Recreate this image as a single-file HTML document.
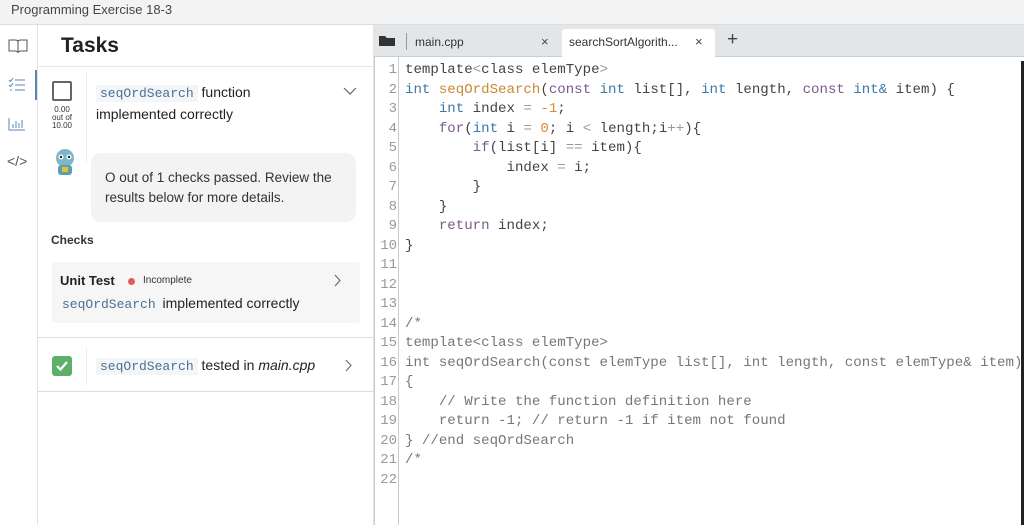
<!DOCTYPE html>
<html><head><meta charset="utf-8"><style>
*{margin:0;padding:0;box-sizing:border-box}
body{width:1024px;height:525px;overflow:hidden;background:#fff;font-family:"Liberation Sans",sans-serif;position:relative;color:#222}
.abs{position:absolute}
.title{left:0;top:0;width:1024px;height:25px;background:#f3f3f3;border-bottom:1px solid #ddd;font-size:13px;color:#444;padding:2px 0 0 11px}
.rail{left:0;top:25px;width:38px;height:500px;background:#fff;border-right:1px solid #e3e3e3}
.panel{left:38px;top:25px;width:336px;height:500px;background:#fff}
.mono{font-family:"Liberation Mono",monospace;color:#4a7096;background:#f3f5f7;padding:1px 4px;font-size:13px}
.editor{left:374px;top:57px;width:650px;height:468px;border-left:1px solid #ccc;background:#fff}
.gut{position:absolute;left:0;top:0;width:24px;height:468px;border-right:1px solid #ccc;background:#fff}
.ln{position:absolute;left:0;width:22px;text-align:right;color:#999;font-family:"Liberation Mono",monospace;font-size:14px}
.cl{position:absolute;left:30px;white-space:pre;font-family:"Liberation Mono",monospace;font-size:14.1px;color:#444}
.k{color:#3a7aa8}.p{color:#7b5a8c}.f{color:#c88a2f}.n{color:#d98a3a}.o{color:#999}.c{color:#777}
</style></head><body>
<div class="abs title">Programming Exercise 18-3</div>
<div class="abs rail">
 <svg class="abs" style="left:8px;top:13px" width="20" height="16" viewBox="0 0 20 16"><path d="M1 2h6c2 0 3 1 3 2v11c0-1-1-2-3-2H1zM19 2h-6c-2 0-3 1-3 2v11c0-1 1-2 3-2h6z" fill="none" stroke="#555" stroke-width="1"/></svg>
 <svg class="abs" style="left:8px;top:52px" width="18" height="16" viewBox="0 0 18 16"><path d="M1 3l1.5 1.5L5 1M7 3h10M1 8l1.5 1.5L5 6M7 8h10M7 13h10M2 13h2" fill="none" stroke="#5d84b8" stroke-width="1"/></svg>
 <div class="abs" style="left:35px;top:45px;width:2px;height:30px;background:#5d84b8"></div>
 <svg class="abs" style="left:8px;top:92px" width="18" height="14" viewBox="0 0 18 14"><path d="M1 1v12h16M5 11V7M8 11V4M11 11V6M14 11V3" fill="none" stroke="#5d84b8" stroke-width="1"/></svg>
 <div class="abs" style="left:7px;top:128px;font-size:14px;color:#555">&lt;/&gt;</div>
</div>
<div class="abs panel">
 <div class="abs" style="left:0;top:0;width:336px;height:42px;border-bottom:1px solid #e6e6e6"></div>
 <div class="abs" style="left:23px;top:9px;font-size:21px;font-weight:bold;color:#222">Tasks</div>
 <div class="abs" style="left:14px;top:56px;width:20px;height:20px;border:2px solid #666;border-radius:2px"></div>
 <div class="abs" style="left:9px;top:81px;width:30px;text-align:center;font-size:8px;line-height:8px;color:#333">0.00<br>out of<br>10.00</div>
 <div class="abs" style="left:48px;top:47px;width:1px;height:90px;background:#eee"></div>
 <div class="abs" style="left:58px;top:57px;font-size:14px;line-height:20px;width:185px"><span class="mono">seqOrdSearch</span> function implemented correctly</div>
 <svg class="abs" style="left:305px;top:62px" width="14" height="9"><path d="M1 1l6 6 6-6" fill="none" stroke="#666" stroke-width="1.2"/></svg>
 <svg class="abs" style="left:14px;top:123px" width="26" height="28" viewBox="0 0 26 28"><circle cx="13" cy="10" r="9" fill="#7fb5c9"/><circle cx="9" cy="9" r="2.5" fill="#fff"/><circle cx="17" cy="9" r="2.5" fill="#fff"/><circle cx="9" cy="9" r="1.2" fill="#222"/><circle cx="17" cy="9" r="1.2" fill="#222"/><rect x="6" y="17" width="14" height="10" rx="3" fill="#5e9db3"/><rect x="10" y="19" width="6" height="5" fill="#e8c230"/></svg>
 <div class="abs" style="left:53px;top:128px;width:265px;height:69px;background:#f3f3f3;border-radius:10px"></div>
 <div class="abs" style="left:67px;top:143px;font-size:13.5px;line-height:20px;color:#333">O out of 1 checks passed. Review the<br>results below for more details.</div>
 <div class="abs" style="left:13px;top:208px;font-size:12px;font-weight:bold;color:#333">Checks</div>
 <div class="abs" style="left:14px;top:237px;width:308px;height:61px;background:#f6f6f6;border-radius:3px"></div>
 <div class="abs" style="left:22px;top:248px;font-size:13px;font-weight:bold;color:#222">Unit Test</div>
 <div class="abs" style="left:90px;top:253px;width:7px;height:7px;border-radius:50%;background:#e05c5c"></div>
 <div class="abs" style="left:105px;top:250px;font-size:10px;color:#333">Incomplete</div>
 <svg class="abs" style="left:296px;top:249px" width="8" height="13"><path d="M1 1l5 5.5L1 12" fill="none" stroke="#666" stroke-width="1.1"/></svg>
 <div class="abs" style="left:24px;top:270px;font-size:14px"><span class="mono" style="background:none;padding:0 3px 0 0">seqOrdSearch</span> implemented correctly</div>
 <div class="abs" style="left:0;top:312px;width:336px;height:1px;background:#ddd"></div>
 <div class="abs" style="left:14px;top:331px;width:20px;height:20px;border-radius:3px;background:#5cb06a"></div>
 <svg class="abs" style="left:17px;top:335px" width="14" height="12"><path d="M2 6l3.5 3.5L12 2" fill="none" stroke="#fff" stroke-width="2.2"/></svg>
 <div class="abs" style="left:48px;top:322px;width:1px;height:38px;background:#eee"></div>
 <div class="abs" style="left:58px;top:332px;font-size:14px"><span class="mono">seqOrdSearch</span> tested in <i>main.cpp</i></div>
 <svg class="abs" style="left:307px;top:334px" width="8" height="13"><path d="M1 1l5 5.5L1 12" fill="none" stroke="#666" stroke-width="1.1"/></svg>
 <div class="abs" style="left:0;top:366px;width:336px;height:1px;background:#ddd"></div>
 <div class="abs" style="left:335px;top:0;width:1px;height:500px;background:#e3e3e3"></div>
</div>
<div class="abs" style="left:374px;top:25px;width:650px;height:32px;background:#e3e6e9;border-bottom:1px solid #ccc"></div>
<svg class="abs" style="left:378px;top:34px" width="18" height="13"><path d="M1 2h6l2 2h8v8H1z" fill="#333"/></svg>
<div class="abs" style="left:406px;top:33px;width:1px;height:17px;background:#999"></div>
<div class="abs" style="left:415px;top:35px;font-size:12px;color:#333">main.cpp</div>
<div class="abs" style="left:541px;top:34px;font-size:13px;color:#444">×</div>
<div class="abs" style="left:562px;top:29px;width:153px;height:28px;background:#fff;border-radius:3px 3px 0 0"></div>
<div class="abs" style="left:569px;top:35px;font-size:12px;color:#333">searchSortAlgorith...</div>
<div class="abs" style="left:695px;top:34px;font-size:13px;color:#444">×</div>
<div class="abs" style="left:727px;top:29px;font-size:19px;color:#444">+</div>
<div class="abs editor">
 <div class="gut"></div>
 <div class="ln" style="top:5px">1</div><div class="ln" style="top:24.5px">2</div><div class="ln" style="top:44px">3</div><div class="ln" style="top:63.5px">4</div><div class="ln" style="top:83px">5</div><div class="ln" style="top:102.5px">6</div><div class="ln" style="top:122px">7</div><div class="ln" style="top:141.5px">8</div><div class="ln" style="top:161px">9</div><div class="ln" style="top:180.5px">10</div><div class="ln" style="top:200px">11</div><div class="ln" style="top:219.5px">12</div><div class="ln" style="top:239px">13</div><div class="ln" style="top:258.5px">14</div><div class="ln" style="top:278px">15</div><div class="ln" style="top:297.5px">16</div><div class="ln" style="top:317px">17</div><div class="ln" style="top:336.5px">18</div><div class="ln" style="top:356px">19</div><div class="ln" style="top:375.5px">20</div><div class="ln" style="top:395px">21</div><div class="ln" style="top:414.5px">22</div>
 <div class="cl" style="top:5px">template<span class="o">&lt;</span>class elemType<span class="o">&gt;</span></div>
 <div class="cl" style="top:24.5px"><span class="k">int</span> <span class="f">seqOrdSearch</span>(<span class="p">const</span> <span class="k">int</span> list[], <span class="k">int</span> length, <span class="p">const</span> <span class="k">int&amp;</span> item) {</div>
 <div class="cl" style="top:44px">    <span class="k">int</span> index <span class="o">=</span> <span class="n">-1</span>;</div>
 <div class="cl" style="top:63.5px">    <span class="p">for</span>(<span class="k">int</span> i <span class="o">=</span> <span class="n">0</span>; i <span class="o">&lt;</span> length;i<span class="o">++</span>){</div>
 <div class="cl" style="top:83px">        <span class="p">if</span>(list[i] <span class="o">==</span> item){</div>
 <div class="cl" style="top:102.5px">            index <span class="o">=</span> i;</div>
 <div class="cl" style="top:122px">        }</div>
 <div class="cl" style="top:141.5px">    }</div>
 <div class="cl" style="top:161px">    <span class="p">return</span> index;</div>
 <div class="cl" style="top:180.5px">}</div>
 <div class="cl c" style="top:258.5px">/*</div>
 <div class="cl c" style="top:278px">template&lt;class elemType&gt;</div>
 <div class="cl c" style="top:297.5px">int seqOrdSearch(const elemType list[], int length, const elemType&amp; item)</div>
 <div class="cl c" style="top:317px">{</div>
 <div class="cl c" style="top:336.5px">    // Write the function definition here</div>
 <div class="cl c" style="top:356px">    return -1; // return -1 if item not found</div>
 <div class="cl c" style="top:375.5px">} //end seqOrdSearch</div>
 <div class="cl c" style="top:395px">/*</div>
 <div class="abs" style="left:646px;top:4px;width:4px;height:464px;background:#222"></div>
</div>
</body></html>
